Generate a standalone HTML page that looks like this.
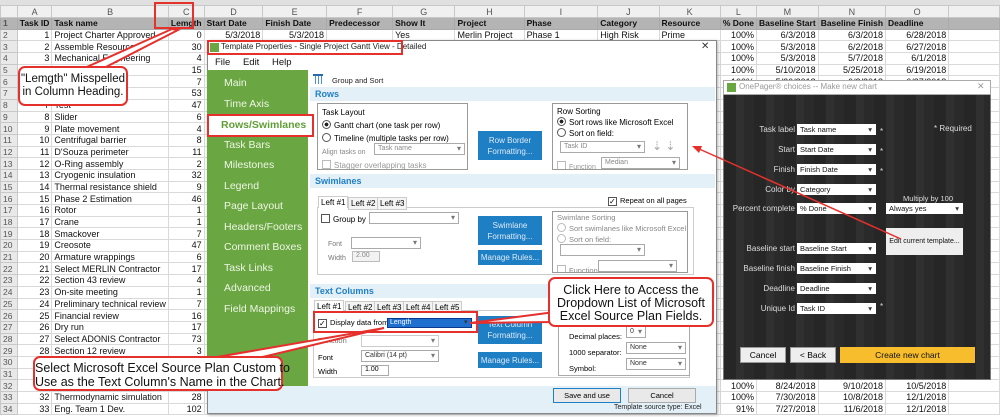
<!DOCTYPE html>
<html><head><meta charset="utf-8"><style>
*{box-sizing:border-box;margin:0;padding:0}
body{width:1000px;height:417px;overflow:hidden;background:#fff;font-family:"Liberation Sans",sans-serif;position:relative}
.a{position:absolute;white-space:nowrap}
table{border-collapse:collapse;table-layout:fixed;position:absolute;left:0;top:5px;font-size:9px;color:#111}
td{border:1px solid #d9d9d9;height:11.7px;line-height:10px;padding:0 2px;white-space:nowrap;overflow:hidden}
tr.ch td{background:#f0f0f0;color:#555;text-align:center;height:12px;border-color:#c8c8c8}
tr.h1 td{background:#b4b4b4;font-weight:bold;border-color:#aaa;font-size:8.5px}
td.rn{background:#e9e9e9;color:#555;text-align:left;font-size:8.5px;border-color:#c8c8c8}
.r{text-align:right}
.side div{position:absolute;left:17px;color:#eef6e6;font-size:10.5px}
.btn{position:absolute;background:#1f7fc5;color:#dceaf6;font-size:8px;text-align:center;display:flex;align-items:center;justify-content:center;line-height:11px;white-space:nowrap}
.band{position:absolute;left:310px;width:405px;height:14px;background:#e3f0f7;color:#1f7fc5;font-weight:bold;font-size:9px;padding:2px 0 0 5px}
.box{position:absolute;border:1px solid #999;background:#fff;white-space:nowrap;overflow:hidden}
.dd{position:absolute;border:1px solid #aaa;background:#fff;font-size:7px;color:#888;padding:1px 3px;height:12px;white-space:nowrap}
.dd:after{content:"▾";position:absolute;right:3px;top:0;color:#777;font-size:8px}
.od{position:absolute;left:797px;width:79px;height:11px;background:#fff;color:#111;font-size:7.5px;padding:0 3px;line-height:11px;white-space:nowrap}
.od:after{content:"▾";position:absolute;right:4px;color:#333}
.ol{position:absolute;right:205px;color:#ddd;font-size:8px;text-align:right;white-space:nowrap}
.call{position:absolute;border:2px solid #e5302c;border-radius:7px;background:#fff;color:#111;text-align:center;font-size:12.5px;line-height:13px;white-space:nowrap}
.tab{position:absolute;font-size:8px;border:1px solid #ccc;padding:1px 2px;background:#f4f4f4;white-space:nowrap}
.chk{display:inline-block;width:9px;height:9px;border:1px solid #555;background:#fff;vertical-align:-1px;margin-right:3px}
.rad{display:inline-block;width:9px;height:9px;border:1px solid #555;border-radius:50%;background:#fff;vertical-align:-1px;margin-right:3px}
</style></head><body>
<div class="a" style="left:0;top:0;width:1000px;height:5px;background:#e0e0e0"></div>
<table>
<colgroup><col style="width:17px"><col style="width:30px"><col style="width:111px"><col style="width:35px"><col style="width:60px"><col style="width:65px"><col style="width:67px"><col style="width:65px"><col style="width:70px"><col style="width:77px"><col style="width:63px"><col style="width:63px"><col style="width:32px"><col style="width:60px"><col style="width:65px"><col style="width:65px"><col style="width:55px"></colgroup>
<tr class="ch"><td></td><td>A</td><td>B</td><td>C</td><td>D</td><td>E</td><td>F</td><td>G</td><td>H</td><td>I</td><td>J</td><td>K</td><td>L</td><td>M</td><td>N</td><td>O</td><td></td></tr>
<tr class="h1"><td class="rn">1</td><td>Task ID</td><td>Task name</td><td class="r">Lemgth</td><td>Start Date</td><td>Finish Date</td><td>Predecessor</td><td>Show It</td><td>Project</td><td>Phase</td><td>Category</td><td>Resource</td><td class="r">% Done</td><td>Baseline Start</td><td>Baseline Finish</td><td>Deadline</td><td></td></tr>
<tr><td class="rn">2</td><td class="r">1</td><td>Project Charter Approved</td><td class="r">0</td><td class="r">5/3/2018</td><td class="r">5/3/2018</td><td></td><td>Yes</td><td>Merlin Project</td><td>Phase 1</td><td>High Risk</td><td>Prime</td><td class="r">100%</td><td class="r">6/3/2018</td><td class="r">6/3/2018</td><td class="r">6/28/2018</td><td></td></tr>
<tr><td class="rn">3</td><td class="r">2</td><td>Assemble Resources</td><td class="r">30</td><td></td><td></td><td></td><td></td><td></td><td></td><td></td><td></td><td class="r">100%</td><td class="r">5/3/2018</td><td class="r">6/2/2018</td><td class="r">6/27/2018</td><td></td></tr>
<tr><td class="rn">4</td><td class="r">3</td><td>Mechanical Engineering</td><td class="r">4</td><td></td><td></td><td></td><td></td><td></td><td></td><td></td><td></td><td class="r">100%</td><td class="r">5/3/2018</td><td class="r">5/7/2018</td><td class="r">6/1/2018</td><td></td></tr>
<tr><td class="rn">5</td><td class="r">4</td><td>Design</td><td class="r">15</td><td></td><td></td><td></td><td></td><td></td><td></td><td></td><td></td><td class="r">100%</td><td class="r">5/10/2018</td><td class="r">5/25/2018</td><td class="r">6/19/2018</td><td></td></tr>
<tr><td class="rn">6</td><td class="r">5</td><td>Review</td><td class="r">7</td><td></td><td></td><td></td><td></td><td></td><td></td><td></td><td></td><td class="r">100%</td><td class="r">5/26/2018</td><td class="r">6/2/2018</td><td class="r">6/27/2018</td><td></td></tr>
<tr><td class="rn">7</td><td class="r">6</td><td>Build</td><td class="r">53</td><td></td><td></td><td></td><td></td><td></td><td></td><td></td><td></td><td></td><td></td><td></td><td></td><td></td></tr>
<tr><td class="rn">8</td><td class="r">7</td><td>Test</td><td class="r">47</td><td></td><td></td><td></td><td></td><td></td><td></td><td></td><td></td><td></td><td></td><td></td><td></td><td></td></tr>
<tr><td class="rn">9</td><td class="r">8</td><td>Slider</td><td class="r">6</td><td></td><td></td><td></td><td></td><td></td><td></td><td></td><td></td><td></td><td></td><td></td><td></td><td></td></tr>
<tr><td class="rn">10</td><td class="r">9</td><td>Plate movement</td><td class="r">4</td><td></td><td></td><td></td><td></td><td></td><td></td><td></td><td></td><td></td><td></td><td></td><td></td><td></td></tr>
<tr><td class="rn">11</td><td class="r">10</td><td>Centrifugal barrier</td><td class="r">8</td><td></td><td></td><td></td><td></td><td></td><td></td><td></td><td></td><td></td><td></td><td></td><td></td><td></td></tr>
<tr><td class="rn">12</td><td class="r">11</td><td>D'Souza perimeter</td><td class="r">11</td><td></td><td></td><td></td><td></td><td></td><td></td><td></td><td></td><td></td><td></td><td></td><td></td><td></td></tr>
<tr><td class="rn">13</td><td class="r">12</td><td>O-Ring assembly</td><td class="r">2</td><td></td><td></td><td></td><td></td><td></td><td></td><td></td><td></td><td></td><td></td><td></td><td></td><td></td></tr>
<tr><td class="rn">14</td><td class="r">13</td><td>Cryogenic insulation</td><td class="r">32</td><td></td><td></td><td></td><td></td><td></td><td></td><td></td><td></td><td></td><td></td><td></td><td></td><td></td></tr>
<tr><td class="rn">15</td><td class="r">14</td><td>Thermal resistance shield</td><td class="r">9</td><td></td><td></td><td></td><td></td><td></td><td></td><td></td><td></td><td></td><td></td><td></td><td></td><td></td></tr>
<tr><td class="rn">16</td><td class="r">15</td><td>Phase 2 Estimation</td><td class="r">46</td><td></td><td></td><td></td><td></td><td></td><td></td><td></td><td></td><td></td><td></td><td></td><td></td><td></td></tr>
<tr><td class="rn">17</td><td class="r">16</td><td>Rotor</td><td class="r">1</td><td></td><td></td><td></td><td></td><td></td><td></td><td></td><td></td><td></td><td></td><td></td><td></td><td></td></tr>
<tr><td class="rn">18</td><td class="r">17</td><td>Crane</td><td class="r">1</td><td></td><td></td><td></td><td></td><td></td><td></td><td></td><td></td><td></td><td></td><td></td><td></td><td></td></tr>
<tr><td class="rn">19</td><td class="r">18</td><td>Smackover</td><td class="r">7</td><td></td><td></td><td></td><td></td><td></td><td></td><td></td><td></td><td></td><td></td><td></td><td></td><td></td></tr>
<tr><td class="rn">20</td><td class="r">19</td><td>Creosote</td><td class="r">47</td><td></td><td></td><td></td><td></td><td></td><td></td><td></td><td></td><td></td><td></td><td></td><td></td><td></td></tr>
<tr><td class="rn">21</td><td class="r">20</td><td>Armature wrappings</td><td class="r">6</td><td></td><td></td><td></td><td></td><td></td><td></td><td></td><td></td><td></td><td></td><td></td><td></td><td></td></tr>
<tr><td class="rn">22</td><td class="r">21</td><td>Select MERLIN Contractor</td><td class="r">17</td><td></td><td></td><td></td><td></td><td></td><td></td><td></td><td></td><td></td><td></td><td></td><td></td><td></td></tr>
<tr><td class="rn">23</td><td class="r">22</td><td>Section 43 review</td><td class="r">4</td><td></td><td></td><td></td><td></td><td></td><td></td><td></td><td></td><td></td><td></td><td></td><td></td><td></td></tr>
<tr><td class="rn">24</td><td class="r">23</td><td>On-site meeting</td><td class="r">1</td><td></td><td></td><td></td><td></td><td></td><td></td><td></td><td></td><td></td><td></td><td></td><td></td><td></td></tr>
<tr><td class="rn">25</td><td class="r">24</td><td>Preliminary technical review</td><td class="r">7</td><td></td><td></td><td></td><td></td><td></td><td></td><td></td><td></td><td></td><td></td><td></td><td></td><td></td></tr>
<tr><td class="rn">26</td><td class="r">25</td><td>Financial review</td><td class="r">16</td><td></td><td></td><td></td><td></td><td></td><td></td><td></td><td></td><td></td><td></td><td></td><td></td><td></td></tr>
<tr><td class="rn">27</td><td class="r">26</td><td>Dry run</td><td class="r">17</td><td></td><td></td><td></td><td></td><td></td><td></td><td></td><td></td><td></td><td></td><td></td><td></td><td></td></tr>
<tr><td class="rn">28</td><td class="r">27</td><td>Select ADONIS Contractor</td><td class="r">73</td><td></td><td></td><td></td><td></td><td></td><td></td><td></td><td></td><td></td><td></td><td></td><td></td><td></td></tr>
<tr><td class="rn">29</td><td class="r">28</td><td>Section 12 review</td><td class="r">3</td><td></td><td></td><td></td><td></td><td></td><td></td><td></td><td></td><td></td><td></td><td></td><td></td><td></td></tr>
<tr><td class="rn">30</td><td class="r">29</td><td>Prototype</td><td class="r">5</td><td></td><td></td><td></td><td></td><td></td><td></td><td></td><td></td><td></td><td></td><td></td><td></td><td></td></tr>
<tr><td class="rn">31</td><td class="r">30</td><td>Integration</td><td class="r">9</td><td></td><td></td><td></td><td></td><td></td><td></td><td></td><td></td><td class="r">100%</td><td></td><td></td><td></td><td></td></tr>
<tr><td class="rn">32</td><td class="r">31</td><td>Pilot</td><td class="r">12</td><td></td><td></td><td></td><td></td><td></td><td></td><td></td><td></td><td class="r">100%</td><td class="r">8/24/2018</td><td class="r">9/10/2018</td><td class="r">10/5/2018</td><td></td></tr>
<tr><td class="rn">33</td><td class="r">32</td><td>Thermodynamic simulation</td><td class="r">28</td><td></td><td></td><td></td><td></td><td></td><td></td><td></td><td></td><td class="r">100%</td><td class="r">7/30/2018</td><td class="r">10/8/2018</td><td class="r">12/1/2018</td><td></td></tr>
<tr><td class="rn">34</td><td class="r">33</td><td>Eng. Team 1 Dev.</td><td class="r">102</td><td></td><td></td><td></td><td></td><td></td><td></td><td></td><td></td><td class="r">91%</td><td class="r">7/27/2018</td><td class="r">11/6/2018</td><td class="r">12/1/2018</td><td></td></tr>
</table>
<div class="a" style="left:154px;top:2px;width:40px;height:27px;border:2px solid #e5302c"></div>

<div class="a" style="left:207px;top:40px;width:510px;height:374px;background:#fff;border:1px solid #888;box-shadow:1px 1px 3px rgba(0,0,0,.3)"></div>
<div class="a" style="left:210px;top:43px;width:9px;height:9px;background:#6aa641"></div>
<div class="a" style="left:221px;top:42px;font-size:8px;color:#222">Template Properties - Single Project Gantt View - Detailed</div>
<div class="a" style="left:207px;top:40px;width:196px;height:15px;border:2px solid #e5302c"></div>
<div class="a" style="left:701px;top:41px;font-size:10px;color:#333">✕</div>
<div class="a" style="left:215px;top:57px;font-size:9.5px;color:#111;word-spacing:10px">File Edit Help</div>
<div class="a side" style="left:207px;top:70px;width:101px;height:316px;background:#6aa641">
<div style="top:7px">Main</div><div style="top:28px">Time Axis</div>
<div style="top:69px">Task Bars</div><div style="top:89px">Milestones</div><div style="top:110px">Legend</div><div style="top:130px">Page Layout</div><div style="top:151px">Headers/Footers</div><div style="top:171px">Comment Boxes</div><div style="top:192px">Task Links</div><div style="top:212px">Advanced</div><div style="top:233px">Field Mappings</div>
</div>
<div class="a" style="left:207px;top:114px;width:107px;height:23px;background:#fff;border:2px solid #e5302c;color:#5f9e37;font-size:10.5px;font-weight:bold;padding:3px 0 0 12px">Rows/Swimlanes</div>
<div class="a" style="left:313px;top:74px;width:10px;height:10px;background:repeating-linear-gradient(90deg,#fff 0 2px,#4a90d9 2px 3px),#4a90d9;border-top:2px solid #2a6ab0"></div>
<div class="a" style="left:332px;top:76px;font-size:7.5px;color:#222">Group and Sort</div>
<div class="band" style="top:87px">Rows</div>
<div class="box" style="left:317px;top:103px;width:151px;height:67px;font-size:8px;padding:2px 4px;line-height:13px">Task Layout<br><span class="rad" style="background:radial-gradient(#222 35%,#fff 40%)"></span>Gantt chart (one task per row)<br><span class="rad"></span>Timeline (multiple tasks per row)<br><span style="color:#888;font-size:7px">Align tasks on</span><br><span style="color:#999"><span class="chk" style="border-color:#bbb"></span>Stagger overlapping tasks</span></div>
<div class="dd" style="left:374px;top:143px;width:91px">Task name</div>
<div class="btn" style="left:478px;top:131px;width:64px;height:29px">Row Border<br>Formatting...</div>
<div class="box" style="left:552px;top:103px;width:136px;height:67px;font-size:8px;padding:2px 4px;line-height:11px">Row Sorting<br><span class="rad" style="background:radial-gradient(#222 35%,#fff 40%)"></span>Sort rows like Microsoft Excel<br><span class="rad"></span>Sort on field:<br><br><br><span style="color:#999;font-size:7px"><span class="chk" style="border-color:#bbb"></span>Function</span></div>
<div class="dd" style="left:560px;top:141px;width:85px">Task ID</div>
<div class="dd" style="left:601px;top:157px;width:79px">Median</div>
<div class="a" style="left:652px;top:139px;font-size:12px;color:#aaa">⇣ ⇣</div>
<div class="band" style="top:174px">Swimlanes</div>
<div class="box" style="left:317px;top:207px;width:377px;height:68px;border-color:#ccc"></div>
<div class="tab" style="left:318px;top:196px;background:#fff;border-bottom:none">Left #1</div>
<div class="tab" style="left:348px;top:197px">Left #2</div>
<div class="tab" style="left:377px;top:197px">Left #3</div>
<div class="a" style="left:608px;top:196px;font-size:7.5px"><span class="chk" style="font-size:8px;line-height:7px">✓</span>Repeat on all pages</div>
<div class="a" style="left:321px;top:214px;font-size:8px"><span class="chk"></span>Group by</div>
<div class="dd" style="left:369px;top:212px;width:90px"></div>
<div class="a" style="left:328px;top:238px;font-size:7px;color:#777;line-height:14px">Font<br>Width</div>
<div class="dd" style="left:351px;top:237px;width:70px"></div>
<div class="a" style="left:352px;top:251px;width:28px;height:11px;border:1px solid #bbb;font-size:7px;color:#888;padding-left:3px;background:#f2f2f2">2.00</div>
<div class="btn" style="left:478px;top:216px;width:64px;height:29px">Swimlane<br>Formatting...</div>
<div class="btn" style="left:478px;top:250px;width:64px;height:15px">Manage Rules...</div>
<div class="box" style="left:552px;top:211px;width:136px;height:62px;font-size:7.5px;color:#888;padding:1px 4px;line-height:10px">Swimlane Sorting<br><span class="rad" style="border-color:#bbb"></span>Sort swimlanes like Microsoft Excel<br><span class="rad" style="border-color:#bbb"></span>Sort on field:<br><br><br><span class="chk" style="border-color:#bbb"></span>Function</div>
<div class="dd" style="left:560px;top:244px;width:85px"></div>
<div class="dd" style="left:598px;top:260px;width:79px"></div>
<div class="band" style="top:284px">Text Columns</div>
<div class="box" style="left:313px;top:310px;width:377px;height:68px;border-color:#ccc"></div>
<div class="tab" style="left:314px;top:300px;background:#fff;border-bottom:none">Left #1</div>
<div class="tab" style="left:345px;top:301px">Left #2</div>
<div class="tab" style="left:374px;top:301px">Left #3</div>
<div class="tab" style="left:403px;top:301px">Left #4</div>
<div class="tab" style="left:432px;top:301px">Left #5</div>
<div class="a" style="left:313px;top:311px;width:165px;height:22px;border:2px solid #e5302c;background:#fff"></div>
<div class="a" style="left:318px;top:318px;font-size:7.5px"><span class="chk" style="font-size:8px;line-height:7px">✓</span>Display data from</div>
<div class="a" style="left:387px;top:318px;width:85px;height:10px;background:#1f6fcf;border:1px solid #0a3a90;color:#fff;font-size:7px;padding-left:2px;line-height:8px">Length</div>
<div class="a" style="left:464px;top:318px;font-size:7px;color:#333">▾</div>
<div class="a" style="left:318px;top:336px;font-size:7.5px;color:#777">Function</div>
<div class="dd" style="left:361px;top:335px;width:78px;border-color:#ccc"></div>
<div class="a" style="left:318px;top:351px;font-size:7.5px;line-height:14px">Font<br>Width</div>
<div class="dd" style="left:361px;top:350px;width:78px;color:#333">Calibri (14 pt)</div>
<div class="a" style="left:361px;top:365px;width:28px;height:11px;border:1px solid #aaa;font-size:7px;padding-left:3px;background:#fff">1.00</div>
<div class="btn" style="left:478px;top:316px;width:64px;height:28px">Text Column<br>Formatting...</div>
<div class="btn" style="left:478px;top:352px;width:64px;height:16px">Manage Rules...</div>
<div class="box" style="left:558px;top:320px;width:132px;height:56px;border-color:#aaa"></div>
<div class="a" style="left:569px;top:329px;font-size:7.5px;line-height:16px">Decimal places:<br>1000 separator:<br>Symbol:</div>
<div class="dd" style="left:626px;top:326px;width:20px;color:#333">0</div>
<div class="dd" style="left:626px;top:342px;width:60px;color:#333">None</div>
<div class="dd" style="left:626px;top:358px;width:60px;color:#333">None</div>
<div class="a" style="left:208px;top:386px;width:508px;height:27px;background:#e3f0f7"></div>
<div class="a" style="left:553px;top:388px;width:68px;height:15px;border:1px solid #1f7fc5;background:#e9e9e9;font-size:7.5px;text-align:center;line-height:13px">Save and use</div>
<div class="a" style="left:628px;top:388px;width:68px;height:15px;border:1px solid #aaa;background:#e9e9e9;font-size:7.5px;text-align:center;line-height:13px">Cancel</div>
<div class="a" style="left:614px;top:404px;font-size:7px;color:#222">Template source type: Excel</div>

<div class="a" style="left:723px;top:80px;width:268px;height:300px;background:repeating-linear-gradient(90deg,#262626 0 12px,#303030 12px 20px,#2a2a2a 20px 30px);border:1px solid #777"></div>
<div class="a" style="left:723px;top:80px;width:268px;height:15px;background:#fff;border:1px solid #aaa"></div>
<div class="a" style="left:727px;top:83px;width:9px;height:9px;background:#6aa641"></div>
<div class="a" style="left:739px;top:82px;font-size:8px;color:#999">OnePager® choices -- Make new chart</div>
<div class="a" style="left:977px;top:81px;font-size:9px;color:#999">✕</div>
<div class="ol" style="top:125px">Task label</div><div class="od" style="top:124px">Task name</div>
<div class="ol" style="top:145px">Start</div><div class="od" style="top:144px">Start Date</div>
<div class="ol" style="top:165px">Finish</div><div class="od" style="top:164px">Finish Date</div>
<div class="ol" style="top:185px">Color by</div><div class="od" style="top:184px">Category</div>
<div class="ol" style="top:204px">Percent complete</div><div class="od" style="top:203px">% Done</div>
<div class="ol" style="top:244px">Baseline start</div><div class="od" style="top:243px">Baseline Start</div>
<div class="ol" style="top:264px">Baseline finish</div><div class="od" style="top:263px">Baseline Finish</div>
<div class="ol" style="top:284px">Deadline</div><div class="od" style="top:283px">Deadline</div>
<div class="ol" style="top:304px">Unique Id</div><div class="od" style="top:303px">Task ID</div>
<div class="a" style="left:880px;top:122px;color:#ddd;font-size:8px;line-height:20px">*<br>*<br>*</div>
<div class="a" style="left:880px;top:302px;color:#ddd;font-size:8px">*</div>
<div class="a" style="left:934px;top:124px;color:#ddd;font-size:8px">* Required</div>
<div class="a" style="left:903px;top:194px;color:#ddd;font-size:7.5px">Multiply by 100</div>
<div class="od" style="left:886px;top:203px;width:77px">Always yes</div>
<div class="a" style="left:886px;top:228px;width:77px;height:27px;background:#eee;font-size:7px;text-align:center;line-height:27px;color:#111">Edit current template...</div>
<div class="a" style="left:740px;top:347px;width:46px;height:16px;background:#eee;border:1px solid #999;font-size:8.5px;text-align:center;line-height:14px">Cancel</div>
<div class="a" style="left:790px;top:347px;width:46px;height:16px;background:#eee;border:1px solid #999;font-size:8.5px;text-align:center;line-height:14px">&lt; Back</div>
<div class="a" style="left:840px;top:347px;width:135px;height:16px;background:#f7bd2d;font-size:8.5px;text-align:center;line-height:16px;color:#111">Create new chart</div>

<svg class="a" style="left:0;top:0" width="1000" height="417">
<line x1="901" y1="239" x2="697" y2="148" stroke="#e5302c" stroke-width="1.5"/>
<polygon points="692,146 702,146 699,153" fill="#e5302c"/>
<polygon points="172,29 178,30 100,70 80,70" fill="#fff" stroke="#e5302c" stroke-width="2"/>
<polygon points="470,323 555,312 556,322" fill="#fff" stroke="#e5302c" stroke-width="2"/>
<polygon points="384,328 200,360 250,360" fill="#fff" stroke="#e5302c" stroke-width="2"/>
</svg>
<div class="call" style="left:18px;top:66px;width:110px;height:40px;padding-top:5px;font-size:11.5px">"Lemgth" Misspelled<br>in Column Heading.</div>
<div class="call" style="left:548px;top:277px;width:166px;height:50px;padding-top:5px;line-height:13px">Click Here to Access the<br>Dropdown List of Microsoft<br>Excel Source Plan Fields.</div>
<div class="call" style="left:33px;top:356px;width:250px;height:35px;padding-top:3px;line-height:14px;font-size:12.5px">Select Microsoft Excel Source Plan Custom to<br>Use as the Text Column's Name in the Chart.</div>
</body></html>
